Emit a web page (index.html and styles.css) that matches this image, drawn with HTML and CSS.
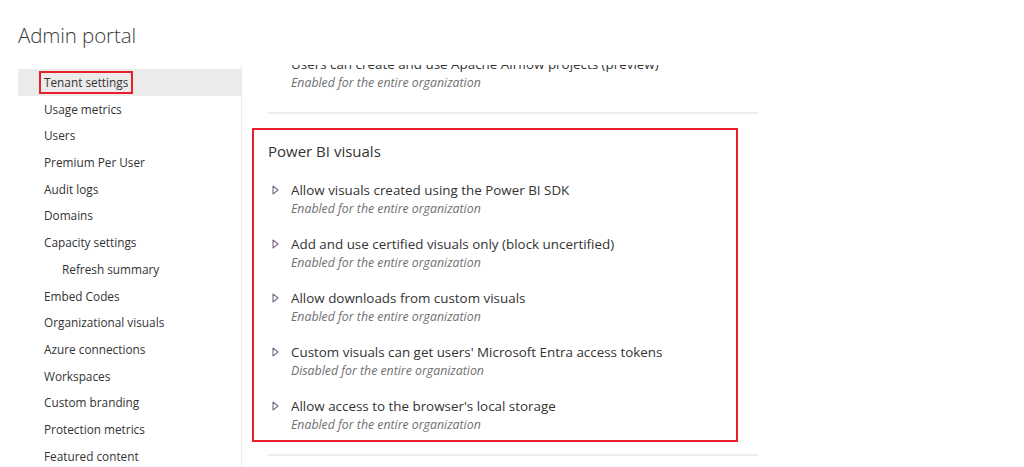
FILE: index.html
```html
<!DOCTYPE html>
<html lang="en">
<head>
<meta charset="utf-8">
<title>Admin portal</title>
<link rel="stylesheet" href="styles.css">
</head>
<body>
<header class="top">
  <h1 class="page-title">Admin portal</h1>
</header>
<div class="layout">
  <nav class="sidebar">
    <ul class="nav">
      <li class="nav-item active"><span class="mark">Tenant settings</span></li>
      <li class="nav-item">Usage metrics</li>
      <li class="nav-item">Users</li>
      <li class="nav-item">Premium Per User</li>
      <li class="nav-item">Audit logs</li>
      <li class="nav-item">Domains</li>
      <li class="nav-item">Capacity settings</li>
      <li class="nav-item sub">Refresh summary</li>
      <li class="nav-item">Embed Codes</li>
      <li class="nav-item">Organizational visuals</li>
      <li class="nav-item">Azure connections</li>
      <li class="nav-item">Workspaces</li>
      <li class="nav-item">Custom branding</li>
      <li class="nav-item">Protection metrics</li>
      <li class="nav-item">Featured content</li>
    </ul>
  </nav>
  <main class="main">
    <div class="content">
      <div class="setting prev">
        <div class="setting-title">Users can create and use Apache Airflow projects (preview)</div>
        <div class="setting-sub">Enabled for the entire organization</div>
      </div>
      <hr class="divider">
      <section class="group">
        <h2 class="group-title">Power BI visuals</h2>
        <div class="setting">
          <svg class="caret" viewBox="0 0 7 10" width="7" height="10"><path d="M1 1 L6 5 L1 9 Z" fill="none" stroke="currentColor" stroke-width="1.1" stroke-linejoin="round"/></svg>
          <div class="setting-title">Allow visuals created using the Power BI SDK</div>
          <div class="setting-sub">Enabled for the entire organization</div>
        </div>
        <div class="setting">
          <svg class="caret" viewBox="0 0 7 10" width="7" height="10"><path d="M1 1 L6 5 L1 9 Z" fill="none" stroke="currentColor" stroke-width="1.1" stroke-linejoin="round"/></svg>
          <div class="setting-title">Add and use certified visuals only (block uncertified)</div>
          <div class="setting-sub">Enabled for the entire organization</div>
        </div>
        <div class="setting">
          <svg class="caret" viewBox="0 0 7 10" width="7" height="10"><path d="M1 1 L6 5 L1 9 Z" fill="none" stroke="currentColor" stroke-width="1.1" stroke-linejoin="round"/></svg>
          <div class="setting-title">Allow downloads from custom visuals</div>
          <div class="setting-sub">Enabled for the entire organization</div>
        </div>
        <div class="setting">
          <svg class="caret" viewBox="0 0 7 10" width="7" height="10"><path d="M1 1 L6 5 L1 9 Z" fill="none" stroke="currentColor" stroke-width="1.1" stroke-linejoin="round"/></svg>
          <div class="setting-title">Custom visuals can get users' Microsoft Entra access tokens</div>
          <div class="setting-sub">Disabled for the entire organization</div>
        </div>
        <div class="setting">
          <svg class="caret" viewBox="0 0 7 10" width="7" height="10"><path d="M1 1 L6 5 L1 9 Z" fill="none" stroke="currentColor" stroke-width="1.1" stroke-linejoin="round"/></svg>
          <div class="setting-title">Allow access to the browser's local storage</div>
          <div class="setting-sub">Enabled for the entire organization</div>
        </div>
      </section>
      <hr class="divider">
    </div>
  </main>
</div>
</body>
</html>
```

FILE: styles.css
```css
html, body {
  margin: 0;
  padding: 0;
  background: #ffffff;
  height: 100%;
  overflow: hidden;
}
body {
  font-family: "Open Sans", "Noto Sans", "Liberation Sans", sans-serif;
  color: #333333;
}
.top {
  height: 65px;
  padding-left: 18px;
  box-sizing: border-box;
}
.page-title {
  margin: 0;
  padding-top: 21px;
  font-size: 20.5px;
  font-weight: 300;
  line-height: 28px;
  color: #3b3b3b;
  letter-spacing: -0.1px;
}
.layout {
  display: flex;
  height: 402px;
}
.sidebar {
  width: 223px;
  margin-left: 18px;
  border-right: 1px solid #ececec;
  padding-top: 4px;
  box-sizing: content-box;
}
.nav {
  list-style: none;
  margin: 0;
  padding: 0;
}
.nav-item {
  height: 26.7px;
  line-height: 26.7px;
  padding-left: 26px;
  font-size: 11.8px;
  color: #333333;
  white-space: nowrap;
}
.nav-item.sub {
  padding-left: 44px;
}
.nav-item.active {
  background: #ebebeb;
  padding-left: 21px;
  display: flex;
  align-items: center;
}
.mark {
  display: inline-block;
  border: 2px solid #e8202a;
  padding: 0 3px;
  line-height: 19px;
}
.main {
  flex: 1;
  overflow: hidden;
  padding-left: 26px;
}
.content {
  width: 490px;
}
.setting {
  position: relative;
  padding-left: 23px;
}
.setting.prev {
  margin-top: -11px;
}
.setting-title {
  font-size: 13.4px;
  line-height: 20px;
  color: #333333;
  white-space: nowrap;
}
.setting-sub {
  font-size: 12.3px;
  line-height: 18px;
  font-style: italic;
  color: #707070;
  white-space: nowrap;
}
.caret {
  position: absolute;
  left: 4px;
  top: 5px;
  color: #7d6a8a;
}
.divider {
  border: 0;
  border-top: 2px solid #eeeeee;
  margin: 20px 0 0 0;
}
.group {
  border: 2px solid #e8202a;
  margin: 14px 20px 12px -16px;
  padding: 10px 14px 6px 14px;
}
.group-title {
  margin: 0 0 18px 0;
  font-size: 15px;
  font-weight: 400;
  line-height: 22px;
  color: #333333;
}
.group .setting + .setting {
  margin-top: 16px;
}
.group + .divider {
  margin-top: 0;
}
```
